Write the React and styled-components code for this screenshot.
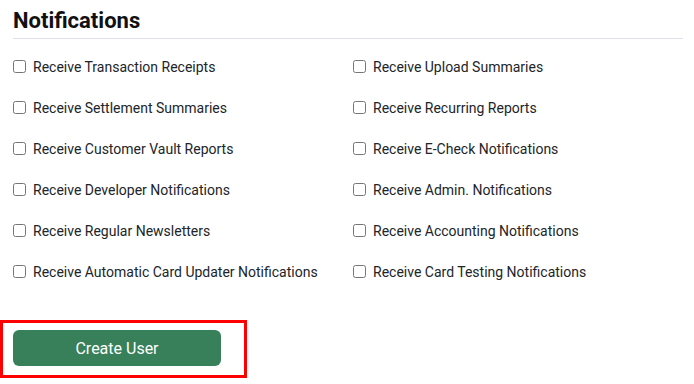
import React from "react";
import styled, { createGlobalStyle } from "styled-components";

const Global = createGlobalStyle`
  body {
    margin: 0;
    background: #ffffff;
    font-family: "Roboto", "Liberation Sans", sans-serif;
    color: #212529;
  }
`;

const Page = styled.div`
  padding: 8px 11px 0 0;
`;

const Section = styled.section`
  padding-left: 13px;
`;

const Title = styled.h2`
  margin: 0;
  font-size: 22px;
  font-weight: 700;
  line-height: 25px;
  color: #111111;
  padding-bottom: 5px;
  border-bottom: 1px solid #dee2e6;
`;

const Grid = styled.div`
  display: grid;
  grid-template-columns: 340px 1fr;
  row-gap: 24px;
  padding-top: 19px;
`;

const Option = styled.label`
  display: flex;
  align-items: center;
  gap: 7px;
  height: 17px;
  font-size: 14px;
  color: #212529;
  cursor: pointer;
`;

const Box = styled.input.attrs({ type: "checkbox" })`
  width: 13px;
  height: 13px;
  margin: 0;
  accent-color: #37805a;
`;

const Highlight = styled.div`
  width: fit-content;
  margin-top: 40px;
  padding: 7px 23px 9px 10px;
  border: 3px solid #ff0000;
`;

const Button = styled.button`
  display: block;
  width: 208px;
  height: 36px;
  border: none;
  border-radius: 6px;
  background: #37805a;
  color: #ffffff;
  font-family: "Roboto", "Liberation Sans", sans-serif;
  font-size: 16px;
`;

const left = [
  "Receive Transaction Receipts",
  "Receive Settlement Summaries",
  "Receive Customer Vault Reports",
  "Receive Developer Notifications",
  "Receive Regular Newsletters",
  "Receive Automatic Card Updater Notifications",
];

const right = [
  "Receive Upload Summaries",
  "Receive Recurring Reports",
  "Receive E-Check Notifications",
  "Receive Admin. Notifications",
  "Receive Accounting Notifications",
  "Receive Card Testing Notifications",
];

export default function App() {
  return (
    <Page>
      <Global />
      <Section>
        <Title>Notifications</Title>
        <Grid>
          {left.map((l, i) => (
            <React.Fragment key={l}>
              <Option>
                <Box />
                {l}
              </Option>
              <Option>
                <Box />
                {right[i]}
              </Option>
            </React.Fragment>
          ))}
        </Grid>
      </Section>
      <Highlight>
        <Button>Create User</Button>
      </Highlight>
    </Page>
  );
}
